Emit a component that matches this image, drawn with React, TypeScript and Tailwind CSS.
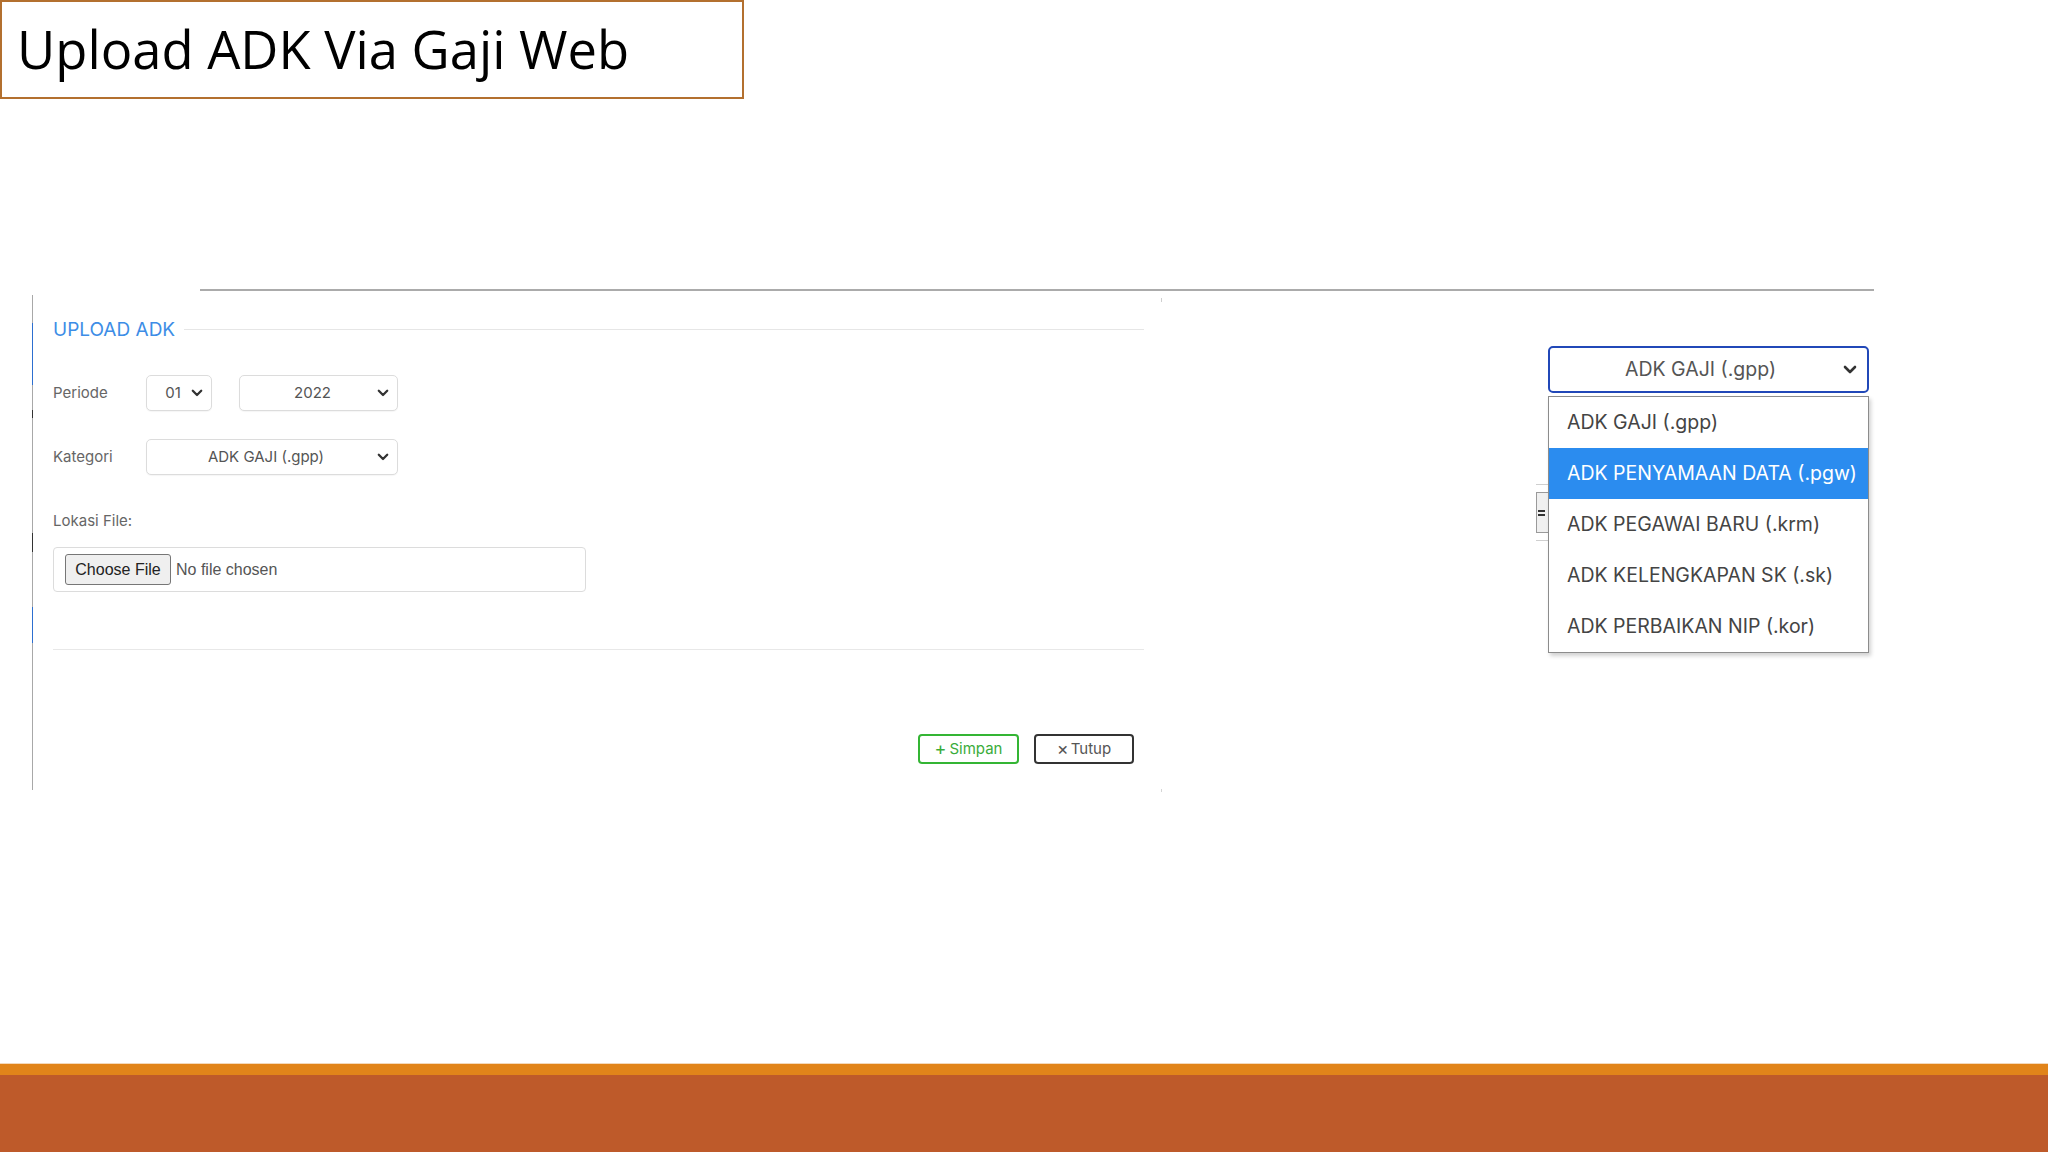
import React from "react";

function Chevron({ big = false }: { big?: boolean }) {
  return big ? (
    <svg width="14" height="9" viewBox="0 0 14 9" className="shrink-0">
      <path d="M2 2 L7 7 L12 2" fill="none" stroke="#333" strokeWidth="2.6" strokeLinecap="round" strokeLinejoin="round" />
    </svg>
  ) : (
    <svg width="12" height="8" viewBox="0 0 12 8" className="shrink-0">
      <path d="M1.8 1.8 L6 6 L10.2 1.8" fill="none" stroke="#333" strokeWidth="2.3" strokeLinecap="round" strokeLinejoin="round" />
    </svg>
  );
}

const inter = { fontFamily: "Inter, 'Noto Sans', sans-serif" };

function FakeSelect({ w, text, pr }: { w: string; text: string; pr: string }) {
  return (
    <div className={`${w} h-[36px] border border-[#dcdcdc] rounded-[5px] bg-white shadow-[0_1px_1px_rgba(0,0,0,0.04)] flex items-center ${pr} text-[15px] text-[#555]`}>
      <span className="flex-1 text-center">{text}</span>
      <Chevron />
    </div>
  );
}

export default function App() {
  const items = [
    "ADK GAJI (.gpp)",
    "ADK PENYAMAAN DATA (.pgw)",
    "ADK PEGAWAI BARU (.krm)",
    "ADK KELENGKAPAN SK (.sk)",
    "ADK PERBAIKAN NIP (.kor)",
  ];
  return (
    <div className="w-[2048px] h-[1152px] bg-white flex flex-col overflow-hidden">
      {/* Title */}
      <div className="w-[744px] h-[99px] shrink-0 border-2 border-[#b3702f] flex items-center pl-[15px]">
        <span
          className="text-[52.5px] leading-none text-black"
          style={{ fontFamily: "'Open Sans', 'Noto Sans', sans-serif" }}
        >
          Upload ADK Via Gaji Web
        </span>
      </div>

      {/* Content */}
      <div className="flex-1 flex flex-col" style={inter}>
        <div className="mt-[190px] ml-[200px] w-[1674px] h-[2px] bg-[#ababab]" />
        <div className="flex mt-[4px]">
          {/* Left panel */}
          <div className="relative ml-[32px] w-[1130px] h-[495px] border-l border-[#a8a8a8] pl-[20px] pr-[18px] pt-[22px] flex flex-col">
            {/* border artifacts */}
            <div className="absolute left-[-1px] top-[28px] w-px h-[62px] bg-[#2d6fd0]" />
            <div className="absolute left-[-1px] top-[115px] w-px h-[8px] bg-[#333]" />
            <div className="absolute left-[-1px] top-[238px] w-px h-[19px] bg-[#333]" />
            <div className="absolute left-[-1px] top-[312px] w-px h-[36px] bg-[#2d6fd0]" />
            <div className="absolute right-0 top-[3px] w-px h-[4px] bg-[#cfcfcf]" />
            <div className="absolute right-0 bottom-[-2px] w-px h-[3px] bg-[#d5d5d5]" />

            <div className="h-[24px] flex items-center">
              <span className="text-[19px] text-[#3d8de6] leading-none">UPLOAD ADK</span>
              <div className="ml-[9px] flex-1 h-px bg-[#e6e6e6]" />
            </div>

            <div className="mt-[34px] h-[36px] flex items-center">
              <span className="w-[93px] text-[15px] text-[#666]">Periode</span>
              <FakeSelect w="w-[66px]" text="01" pr="pr-[8px] pl-[8px]" />
              <div className="ml-[27px]">
                <FakeSelect w="w-[159px]" text="2022" pr="pr-[8px] pl-[8px]" />
              </div>
            </div>

            <div className="mt-[28px] h-[36px] flex items-center">
              <span className="w-[93px] text-[15px] text-[#666]">Kategori</span>
              <FakeSelect w="w-[252px]" text="ADK GAJI (.gpp)" pr="pr-[8px] pl-[8px]" />
            </div>

            <div className="mt-[36px] h-[20px] leading-[20px] text-[15px] text-[#666]">Lokasi File:</div>

            <div className="mt-[16px] w-[533px] h-[45px] border border-[#dcdcdc] rounded-[4px] flex items-center pl-[11px]"
              style={{ fontFamily: "'Liberation Sans', Arial, sans-serif" }}>
              <div className="w-[106px] h-[31px] bg-[#efefef] border border-[#767676] rounded-[3px] flex items-center justify-center text-[16px] text-[#222]">
                Choose File
              </div>
              <span className="ml-[5px] text-[16px] text-[#555]">No file chosen</span>
            </div>

            <div className="mt-[57px] h-px bg-[#e8e8e8]" />

            <div className="mt-[84px] flex justify-end pr-[10px] gap-[15px]">
              <div className="w-[101px] h-[30px] border-2 border-[#34b534] rounded-[4px] flex items-center justify-center text-[15px] text-[#3aac3a]">
                <span className="mr-[3px] text-[18px] leading-none">+</span>Simpan
              </div>
              <div className="w-[100px] h-[30px] border-2 border-[#333] rounded-[4px] flex items-center justify-center text-[15px] text-[#555]">
                <span className="mr-[2px] text-[18px] leading-none">×</span>Tutup
              </div>
            </div>
          </div>

          {/* Right: open dropdown */}
          <div className="relative ml-[386px] mt-[51px] w-[321px]">
            {/* partially hidden control behind the list */}
            <div className="absolute left-[-12px] top-[138px] w-[13px] h-[57px] border-y border-[#cfcfcf]">
              <div className="mt-[7px] h-[41px] border-y border-l border-[#9a9a9a] bg-[#f0f0f0] relative">
                <div className="absolute left-[1px] top-[17px] w-[7px] h-[2px] bg-[#333]" />
                <div className="absolute left-[1px] top-[21px] w-[7px] h-[2px] bg-[#333]" />
              </div>
            </div>

            <div className="h-[47px] border-2 border-[#2148b8] rounded-[5px] bg-white flex items-center pr-[10px] text-[19.5px] text-[#555]">
              <span className="flex-1 text-center pl-[8px]">ADK GAJI (.gpp)</span>
              <Chevron big />
            </div>

            <div className="absolute left-0 top-[50px] w-[321px] bg-white border border-[#8c8c8c] shadow-[2px_3px_4px_rgba(0,0,0,0.18)]">
              {items.map((t, i) => (
                <div
                  key={t}
                  className={
                    i === 1
                      ? "h-[51px] flex items-center pl-[18px] text-[19.5px] bg-[#2b8cef] text-white"
                      : "h-[51px] flex items-center pl-[18px] text-[19.5px] text-[#444]"
                  }
                >
                  {t}
                </div>
              ))}
            </div>
          </div>
        </div>
      </div>

      {/* Footer band */}
      <div className="h-[89px] shrink-0 flex flex-col">
        <div className="h-px bg-[#f4d9bb]" />
        <div className="h-[11px] bg-[#e1841a]" />
        <div className="flex-1 bg-[#be5a2a]" />
      </div>
    </div>
  );
}
